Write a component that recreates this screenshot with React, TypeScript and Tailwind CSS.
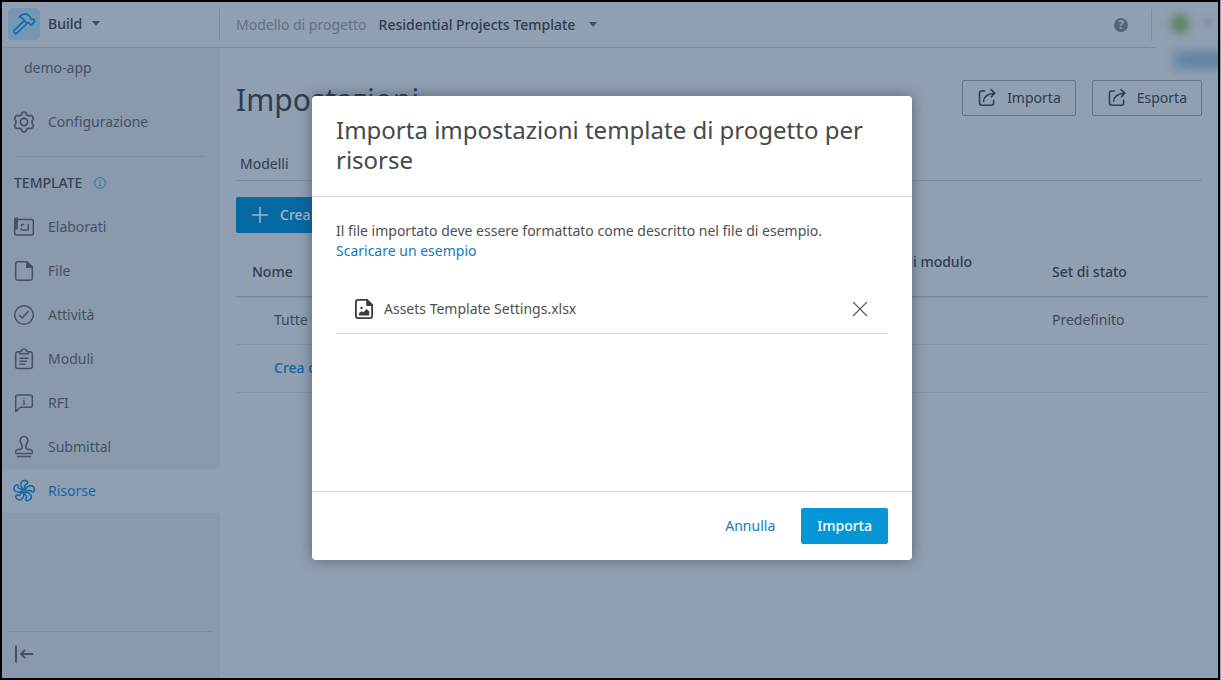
import React from "react";

type IconProps = { children: React.ReactNode; className?: string };

const Icon: React.FC<IconProps> = ({ children, className }) => (
    <svg
        viewBox="0 0 24 24"
        fill="none"
        stroke="currentColor"
        strokeWidth="1.5"
        strokeLinecap="round"
        strokeLinejoin="round"
        aria-hidden="true"
        className={className ?? "w-6 h-6 shrink-0"}
    >
        {children}
    </svg>
);

const HammerIcon = () => (
    <Icon>
        <path d="M12.4 8.6 1.8 18.6Q1.2 19.4 1.8 20L3.2 21.4Q3.8 22 4.6 21.4L15 11.2" />
        <path d="M12.4 8.6Q10.6 5.6 7.2 4.8Q11.2 0.8 16 2.8L18.6 5.6V6.8Q19.8 8 21.6 6.8L22.8 9.4L18.8 13.2L17.4 11.2Q16.2 10.4 15 11.2Z" />
    </Icon>
);

const GearIcon = () => (
    <Icon>
        <path
            strokeWidth="1.7"
            d="M10 3.2Q10.2 2 12 2T14 3.2L14.4 4.6Q15.5 5 16.6 5.8L18.4 5.5Q19.6 5.2 20.8 7Q21.8 8.8 20.9 9.7L20 10.8Q20.3 12 20 13.2L20.9 14.3Q21.8 15.2 20.8 17Q19.6 18.8 18.4 18.5L16.6 18.2Q15.5 19 14.4 19.4L14 20.8Q13.8 22 12 22T10 20.8L9.6 19.4Q8.5 19 7.4 18.2L5.6 18.5Q4.4 18.8 3.2 17Q2.2 15.2 3.1 14.3L4 13.2Q3.7 12 4 10.8L3.1 9.7Q2.2 8.8 3.2 7Q4.4 5.2 5.6 5.5L7.4 5.8Q8.5 5 9.6 4.6Z"
        />
        <circle cx="12" cy="12" r="3.6" strokeWidth="1.7" />
    </Icon>
);

const SheetsIcon = () => (
    <Icon>
        <path d="M5 4.5H19.5Q21.3 4.5 21.3 6.3V18.2Q21.3 20 19.5 20H4.7Q2.7 20 2.7 18V5" />
        <path d="M2 16V4.2Q2 2.6 3.4 2.6H5.8V14.6H4Q2.6 14.8 2 16Z" fill="currentColor" stroke="none" />
        <path d="M9.5 11.4V9.4H12.4M16.3 8.8V15H9.2V13.2" strokeLinecap="butt" />
    </Icon>
);

const FileIcon = () => (
    <Icon>
        <path d="M15 2.7H6Q3.7 2.7 3.7 5V19Q3.7 21.3 6 21.3H18Q20.3 21.3 20.3 19V8" />
        <path d="M14 2H15.2L21 7.8V9H14.8Q14 9 14 8.2Z" fill="currentColor" stroke="none" />
    </Icon>
);

const CheckIcon = () => (
    <Icon>
        <circle cx="12" cy="12" r="9.3" />
        <path d="M7.8 12.6 10.2 15 16.3 8.4" />
    </Icon>
);

const ClipboardIcon = () => (
    <Icon>
        <path d="M7.5 4.7H6Q3.7 4.7 3.7 7V19.6Q3.7 21.6 6 21.6H18Q20.3 21.6 20.3 19.6V7Q20.3 4.7 18 4.7H16.5" />
        <path d="M7.6 6.8V5Q7.6 4 8.8 4H9.8Q10 2 12 2T14.2 4H15.2Q16.4 4 16.4 5V6.8Z" />
        <path d="M8 11.2H16M8 14.2H14.4M8 17.2H12.6" />
    </Icon>
);

const SpeechIcon = () => (
    <Icon>
        <path d="M3.7 20.6V6Q3.7 3.9 5.8 3.9H18.4Q20.3 3.9 20.3 5.8V14.4Q20.3 16.3 18.4 16.3H8.4Z" />
        <path d="M12 9.6V13.2M11.4 9.6H12M11.2 13.2H12.8M12 7.4V7.5" strokeWidth="1.2" />
    </Icon>
);

const StampIcon = () => (
    <Icon>
        <path d="M10.2 11.8Q10.2 10.6 9.4 9.2Q7.4 6 8.8 3.4Q10 1.6 12 1.6T15.2 3.4Q16.6 6 14.6 9.2Q13.8 10.6 13.8 11.8Q13.8 14.4 16.6 14.6H18.4Q20.4 15 20.4 17Q20.4 18.6 19.2 18.6H4.8Q3.6 18.6 3.6 17Q3.6 15 5.6 14.6H7.4Q10.2 14.4 10.2 11.8Z" />
        <path d="M5.4 21.4H18.6" />
    </Icon>
);

const bladeAngles = [0, 72, 144, 216, 288];

const FanIcon = () => (
    <Icon>
        {bladeAngles.map((angle) => (
            <path
                key={angle}
                transform={`rotate(${angle} 12 12)`}
                d="M11.2 10.3Q8.6 8 8.8 5Q9.3 1.4 12.8 1.5Q15.6 1.8 15.8 3.6Q15.7 4.8 14 5.2Q12.4 6 13 8.4L13 10.3"
            />
        ))}
        <circle cx="12" cy="12" r="1.4" />
    </Icon>
);

const ShareIcon = () => (
    <Icon className="w-5 h-5 shrink-0">
        <path d="M9 3.6H5.4Q3 3.6 3 6V17.8Q3 20.8 6 20.8H17Q20 20.8 20 17.8V14.6" strokeWidth="1.8" />
        <path d="M8 16Q8 7.6 20.6 6.2M16.8 2 21.4 6.1 17.4 10.6" strokeWidth="1.8" />
    </Icon>
);

const ImageFileIcon = () => (
    <Icon>
        <path d="M15 2.9H6Q3.9 2.9 3.9 5V19Q3.9 21.1 6 21.1H18Q20.1 21.1 20.1 19V8" strokeWidth="1.8" />
        <path d="M14.2 2H15.4L21 7.6V9H15Q14.2 9 14.2 8.2Z" fill="currentColor" stroke="none" />
        <path d="M7 18.4V16L9.6 14.2L11.6 15.2L14.6 12L17.2 14.6V18.4Z" fill="currentColor" stroke="none" />
        <circle cx="9.5" cy="11" r="1.2" fill="currentColor" stroke="none" />
    </Icon>
);

const Caret = () => (
    <svg viewBox="0 0 8 5" className="w-2 h-[5px] shrink-0" fill="currentColor" aria-hidden="true">
        <path d="M0 0H8L4.5 4.3Q4 4.8 3.5 4.3Z" />
    </svg>
);

const navItems = [
    { label: "Elaborati", icon: <SheetsIcon /> },
    { label: "File", icon: <FileIcon /> },
    { label: "Attività", icon: <CheckIcon /> },
    { label: "Moduli", icon: <ClipboardIcon /> },
    { label: "RFI", icon: <SpeechIcon /> },
    { label: "Submittal", icon: <StampIcon /> },
    { label: "Risorse", icon: <FanIcon />, active: true },
];

const Header = () => (
    <header className="flex items-center h-[46px] border-b border-[#7c8ca1] text-[#2e3c50]">
        <button className="flex items-center w-[217px] pb-0.5 pl-1.5 text-sm font-medium">
            <span className="flex items-center justify-center w-8 h-8 mr-2 rounded-sm bg-[#7697b4] text-[#0a6ba6]">
                <HammerIcon />
            </span>
            Build
            <span className="ml-2.5 text-[#3f4e62]"><Caret /></span>
        </button>
        <div className="flex items-center h-8 pl-4 border-l border-[#7c8ca1] text-sm">
            <span className="text-[#637186]">Modello di progetto</span>
            <button className="flex items-center gap-3.5 ml-3 font-medium">
                Residential Projects Template
                <span className="text-[#3f4e62]"><Caret /></span>
            </button>
        </div>
        <button
            aria-label="Guida"
            className="flex items-center justify-center w-3.5 h-3.5 ml-auto mr-[23px] rounded-full bg-[#55637a] text-[#919fb2] text-xs font-bold"
        >
            ?
        </button>
        <div className="w-[67px] h-8 border-l border-[#7c8ca1]" />
    </header>
);

const Sidebar = () => (
    <aside className="flex flex-col w-[218px] shrink-0 bg-[#8b99ac] text-sm text-[#445166]">
        <div className="pl-[22px] pt-2.5 leading-5">demo-app</div>
        <a href="#configurazione" className="flex items-center gap-3 h-11 mt-[22px] pl-2.5">
            <GearIcon />
            Configurazione
        </a>
        <hr className="mt-3 ml-3.5 mr-4 border-[#7c8ca1]" />
        <div className="flex items-center gap-3 h-5 mt-4 mb-3 pl-3 font-medium text-[#364357]">
            TEMPLATE
            <svg viewBox="0 0 12 12" className="w-3 h-3 text-[#277eb4]" fill="none" stroke="currentColor" aria-hidden="true">
                <circle cx="6" cy="6" r="5.4" />
                <path d="M5 5.4H6V8.6M4.8 8.7H7.2M6 3V4" />
            </svg>
        </div>
        <nav>
            {navItems.map((item) => (
                <a
                    key={item.label}
                    href={`#${item.label.toLowerCase()}`}
                    className={
                        item.active
                            ? "flex items-center gap-3 h-11 pl-2.5 bg-[#919fb2] text-[#1067a0]"
                            : "flex items-center gap-3 h-11 pl-2.5"
                    }
                >
                    {item.icon}
                    {item.label}
                </a>
            ))}
        </nav>
        <div className="mt-auto ml-1.5 mr-2 border-t border-[#7c8ca1]">
            <button aria-label="Comprimi" className="flex items-center h-[46px] pb-0.5 pl-1">
                <Icon>
                    <path d="M4 3.4V20.6" strokeWidth="2" strokeLinecap="butt" />
                    <path d="M9 12H20.5M12.5 8.5 9 12 12.5 15.5" strokeWidth="1.8" />
                </Icon>
            </button>
        </div>
    </aside>
);

const Content = () => (
    <main className="flex-1 min-w-0 pl-4 pr-2.5 pt-8 text-sm text-[#2e3c50]">
        <div className="mr-1.5">
            <div className="flex items-start gap-4">
                <h1 className="mr-auto text-[30px] leading-10">Impostazioni</h1>
                <button className="flex items-center gap-2.5 h-9 px-3.5 border border-[#65748a] rounded-xs">
                    <ShareIcon />
                    Importa
                </button>
                <button className="flex items-center gap-2.5 h-9 px-3.5 border border-[#65748a] rounded-xs">
                    <ShareIcon />
                    Esporta
                </button>
            </div>
            <div className="flex items-center h-[61px] pt-7 border-b border-[#7c8ca1]">
                <a href="#modelli" className="pl-1">Modelli</a>
            </div>
        </div>
        <button className="flex items-center gap-2 h-9 mt-4 px-3 rounded-xs bg-[#0669a3] text-[#a6b5c8] font-medium">
            <Icon>
                <path d="M12 4.5V19.5M4.5 12H19.5" />
            </Icon>
            Crea categoria
        </button>
        <table className="w-full mt-2 table-fixed text-left leading-5">
            <thead>
                <tr className="h-[55px] border-b border-[#7686a0] shadow-[0_3px_2px_-2px_rgba(70,86,110,0.4)]">
                    <th className="pl-4 pt-2 font-medium">Nome</th>
                    <th className="w-[240px] pr-[63px] pb-3 text-right font-medium">Modello di modulo</th>
                    <th className="w-[173px] pl-[17px] pt-2 font-medium">Set di stato</th>
                </tr>
            </thead>
            <tbody>
                <tr className="h-12 border-b border-[#8494a9] text-[#3b495d]">
                    <td className="pl-[38px]">Tutte le risorse</td>
                    <td></td>
                    <td className="pl-[17px]">Predefinito</td>
                </tr>
                <tr className="h-12 border-b border-[#8494a9]">
                    <td className="pl-[38px]">
                        <button className="font-medium text-[#1067a0]">Crea categoria</button>
                    </td>
                    <td></td>
                    <td></td>
                </tr>
            </tbody>
        </table>
    </main>
);

const ImportDialog = () => (
    <div
        role="dialog"
        aria-modal="true"
        aria-labelledby="dialog-title"
        className="w-[600px] rounded-sm bg-white text-sm text-[#505050] shadow-[0_0_14px_rgba(40,52,70,0.55)]"
    >
        <h2 id="dialog-title" className="px-6 pt-[19px] pb-[21px] text-2xl leading-[30px] border-b border-[#dcdcdc] text-[#484848]">
            Importa impostazioni template di progetto per risorse
        </h2>
        <div className="h-[294px] px-6 pt-6 leading-5">
            <p>Il file importato deve essere formattato come descritto nel file di esempio.</p>
            <a href="#esempio" className="text-[#1779ba]">Scaricare un esempio</a>
            <div className="flex items-center gap-2 h-[49px] mt-6 pl-4 pr-4 border-b border-[#dcdcdc]">
                <span className="text-[#3c3c3c]"><ImageFileIcon /></span>
                <span className="mr-auto">Assets Template Settings.xlsx</span>
                <button aria-label="Rimuovi file">
                    <Icon>
                        <path d="M5.4 5.4 18.6 18.6M18.6 5.4 5.4 18.6" strokeWidth="1.3" />
                    </Icon>
                </button>
            </div>
        </div>
        <div className="flex items-center justify-end gap-2.5 px-6 py-4 border-t border-[#dcdcdc]">
            <button className="h-9 px-4 text-[#1779ba]">Annulla</button>
            <button className="h-9 px-4 rounded-xs bg-[#0696d7] text-white font-medium">Importa</button>
        </div>
    </div>
);

const App: React.FC = () => {
    return (
        <div className="bg-[#919fb2] pr-px font-['Noto_Sans',sans-serif]">
            <div className="relative flex flex-col min-h-screen overflow-hidden border-2 border-black">
                <Header />
                <div className="flex flex-1">
                    <Sidebar />
                    <Content />
                </div>
                {/* obscured account details */}
                <div className="absolute top-0 right-0 w-[62px] h-[74px] overflow-hidden bg-[#919fb2]">
                    <div className="absolute top-3 left-3.5 w-5 h-5 rounded-full bg-[#5f8568] blur-[4px]" />
                    <div className="absolute top-4 left-12 w-2 h-2 bg-[#7f8da3] blur-[3px]" />
                    <div className="absolute top-12 left-4 w-16 h-5 bg-[#7290ad] blur-[4px]" />
                    <div className="absolute top-13 left-6 w-12 h-3 bg-[#65829f] blur-[4px]" />
                </div>
                <div className="absolute inset-0 flex items-start justify-center pt-[94px] pl-1">
                    <ImportDialog />
                </div>
            </div>
        </div>
    );
};

export default App;
